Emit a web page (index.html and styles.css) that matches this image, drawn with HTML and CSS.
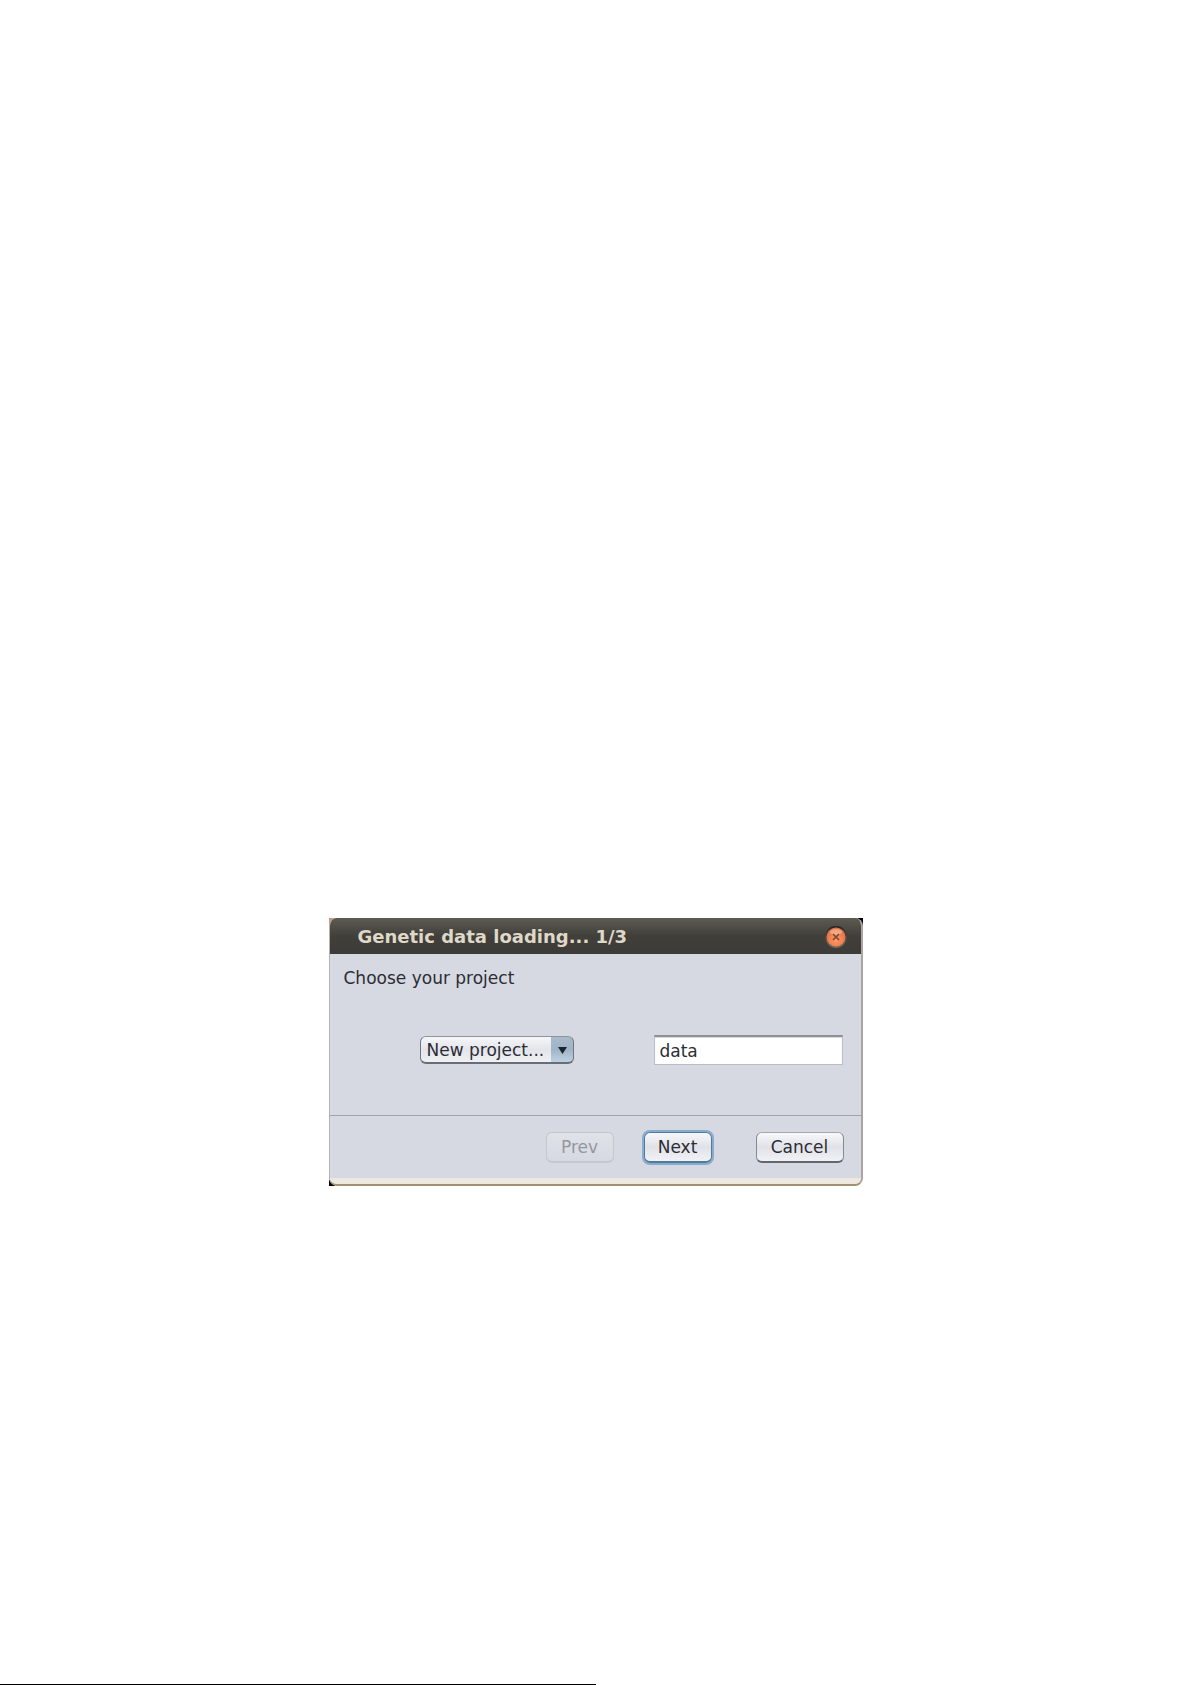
FILE: index.html
```html
<!DOCTYPE html>
<html lang="en">
<head>
  <meta charset="UTF-8">
  <meta name="viewport" content="width=device-width, initial-scale=1.0">
  <title>Genetic data loading</title>
  <link rel="stylesheet" href="styles.css">
</head>
<body>
  <main class="page">
    <div class="frame">
      <form class="dialog">
        <header class="titlebar">
          <h1>Genetic data loading... 1/3</h1>
          <button type="button" class="close" aria-label="Close">
            <svg width="24" height="24" viewBox="0 0 24 24">
              <defs>
                <radialGradient id="orange" cx="50%" cy="65%" r="60%">
                  <stop offset="0" stop-color="#ff9a68"/>
                  <stop offset="0.6" stop-color="#f27f4e"/>
                  <stop offset="1" stop-color="#d6704a"/>
                </radialGradient>
                <linearGradient id="rim" x1="0" y1="0" x2="0" y2="1">
                  <stop offset="0" stop-color="#24211f"/>
                  <stop offset="1" stop-color="#716a62"/>
                </linearGradient>
              </defs>
              <circle cx="12" cy="12" r="11" fill="url(#rim)"/>
              <circle cx="12" cy="12" r="9.5" fill="url(#orange)"/>
              <ellipse cx="12" cy="7" rx="6" ry="3" fill="#ffd0b4" opacity="0.5"/>
              <path d="M9 9l6 6M15 9l-6 6" stroke="#7a4a36" stroke-width="1.7"/>
            </svg>
          </button>
        </header>
        <div class="content">
          <label for="project">Choose your project</label>
          <div class="fields">
            <select id="project">
              <option>New project...</option>
            </select>
            <input type="text" id="name" value="data" aria-label="Project name">
          </div>
        </div>
        <footer class="actions">
          <button type="button" class="btn prev" disabled>Prev</button>
          <button type="submit" class="btn next">Next</button>
          <button type="button" class="btn cancel">Cancel</button>
        </footer>
      </form>
    </div>
    <div class="page-rule"></div>
  </main>
</body>
</html>
```
FILE: styles.css
```css
* {
  box-sizing: border-box;
}
body {
  margin: 0;
  background-color: #fff;
  color: #2c2c34;
  font-family: "DejaVu Sans", sans-serif;
  font-size: 17px;
  line-height: 20px;
}
.page {
  min-height: 100vh;
  padding-top: 918px;
  display: flex;
  flex-direction: column;
  align-items: center;
}
/* desktop corners showing behind the window */
.frame {
  width: 100%;
  max-width: 534px;
  background:
    linear-gradient(#c89878, #c89878) left top / 8px 8px no-repeat,
    linear-gradient(#000, #000) right top / 8px 8px no-repeat,
    linear-gradient(#000, #000) left bottom / 6px 6px no-repeat;
}
.dialog {
  border: 2px solid #aaa5a2;
  border-top: none;
  border-left: 1px solid #b4b2b0;
  border-bottom-color: #a19074;
  border-radius: 8px;
  background-color: #d6d9e1;
  overflow: hidden;
}
.titlebar {
  display: flex;
  justify-content: space-between;
  align-items: center;
  height: 36px;
  padding: 2px 13px 0 28px;
  background: linear-gradient(#5d5b52, #403f3a 50%, #3c3b37);
}
.titlebar h1 {
  margin: 0;
  font-size: 18px;
  font-weight: bold;
  color: #dfd8c8;
}
.close {
  padding: 0;
  border: none;
  background: none;
  cursor: pointer;
}
.close svg {
  display: block;
}
.content {
  padding: 14px 18px 50px 14px;
  border-bottom: 1px solid #9ba3ad;
}
.content label {
  display: block;
}
.fields {
  display: flex;
  justify-content: space-between;
  align-items: center;
  margin-top: 47px;
  padding-left: 76px;
}
select {
  appearance: none;
  width: 154px;
  height: 28px;
  padding: 0 6px;
  border: 1px solid #70757f;
  border-top-color: #8f949e;
  border-bottom: 2px solid #686e78;
  border-radius: 6px;
  background:
    url("data:image/svg+xml,%3Csvg xmlns='http://www.w3.org/2000/svg' width='22' height='26'%3E%3Cpath d='M7 10h9l-4.500 7z' fill='%231c242c'/%3E%3C/svg%3E") right top no-repeat,
    linear-gradient(#a9bac9, #9fb4c6 50%, #bcd2e2) right top / 22px 100% no-repeat,
    linear-gradient(#f5f6f8, #e3e5ea 50%, #eef0f4);
  color: inherit;
  font: inherit;
}
input[type="text"] {
  width: 189px;
  height: 30px;
  padding: 0 5px;
  border: 1px solid #b9bdc5;
  border-top: 2px solid #8d9097;
  background-color: #fff;
  box-shadow: inset 0 1px 1px #d5d7dc;
  color: inherit;
  font: inherit;
  outline: none;
}
.actions {
  display: flex;
  justify-content: flex-end;
  padding: 16px 17px 15px;
  border-bottom: 6px solid #eee7de;
}
.btn {
  height: 31px;
  padding: 0;
  border: 1px solid #858991;
  border-top-color: #a3a7ae;
  border-bottom: 2px solid #62666e;
  border-radius: 6px;
  background: linear-gradient(#f8f8fa, #e0e2e8 50%, #f1f2f6);
  color: inherit;
  font: inherit;
}
.prev {
  width: 68px;
  border-color: #c3c7ce;
  background: linear-gradient(#dfe2e7, #d6d9e1);
  color: #94979e;
}
.next {
  width: 68px;
  margin-left: 30px;
  border-color: #55799b;
  box-shadow: 0 0 0 2px #86acce;
}
.cancel {
  width: 88px;
  margin-left: 44px;
}
.page-rule {
  align-self: flex-start;
  width: 50%;
  height: 1px;
  margin-top: auto;
  background-color: #000;
}
```
